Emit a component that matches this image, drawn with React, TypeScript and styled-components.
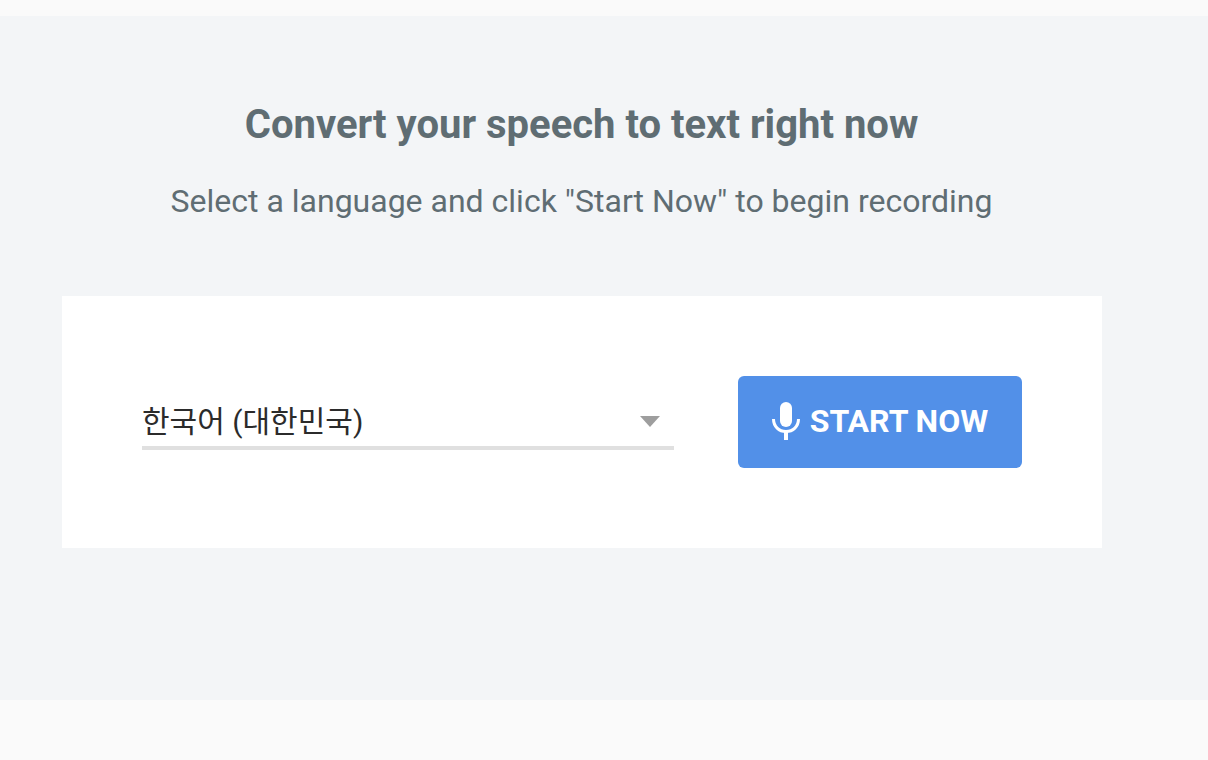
import { createGlobalStyle, styled } from 'styled-components';

const GlobalStyle = createGlobalStyle`
  html, body {
    margin: 0;
    padding: 0;
    background: #fafafa;
  }
`;

const Page = styled.div`
  width: 1208px;
  height: 760px;
  padding-top: 16px;
  box-sizing: border-box;
  background: #fafafa;
  font-family: Roboto, 'Noto Sans CJK KR', sans-serif;
  overflow: hidden;
`;

const Section = styled.section`
  height: 684px;
  background: #f3f5f7;
  padding: 81px 0 0 62px;
  box-sizing: border-box;
`;

const Content = styled.div`
  width: 1039px;
`;

const Title = styled.h2`
  margin: 0;
  font-size: 40px;
  line-height: 56px;
  font-weight: 700;
  color: #5f6d73;
  text-align: center;
`;

const Subtitle = styled.p`
  margin: 27px 0 0;
  font-size: 32px;
  line-height: 42px;
  font-weight: 400;
  color: #5f6d73;
  text-align: center;
`;

const Card = styled.div`
  margin-top: 74px;
  width: 1040px;
  height: 252px;
  background: #fff;
  display: flex;
  align-items: flex-start;
  padding: 80px 80px 0;
  box-sizing: border-box;
  gap: 64px;
`;

const SelectBox = styled.div`
  width: 532px;
  height: 74px;
  border-bottom: 4px solid #e0e0e0;
  box-sizing: border-box;
  display: flex;
  align-items: center;
  justify-content: space-between;
  padding: 16px 14px 0 0;
`;

const SelectValue = styled.span`
  font-size: 30px;
  color: #2b2b2b;
`;

const Caret = styled.span`
  width: 0;
  height: 0;
  margin-top: 4px;
  border-left: 10px solid transparent;
  border-right: 10px solid transparent;
  border-top: 11px solid #9e9e9e;
`;

const StartButton = styled.button`
  width: 284px;
  height: 92px;
  border: 0;
  border-radius: 6px;
  background: #5290e8;
  color: #fff;
  font-family: inherit;
  font-size: 32px;
  font-weight: 700;
  display: flex;
  align-items: center;
  justify-content: center;
  gap: 10px;
  padding: 0 0 2px;
`;

function App() {
  return (
    <>
      <GlobalStyle />
      <Page>
        <Section>
          <Content>
            <Title>Convert your speech to text right now</Title>
            <Subtitle>Select a language and click "Start Now" to begin recording</Subtitle>
            <Card>
              <SelectBox>
                <SelectValue>한국어 (대한민국)</SelectValue>
                <Caret />
              </SelectBox>
              <StartButton>
                <svg width="28" height="38" viewBox="0 0 28 38" fill="none">
                  <rect x="8" y="0" width="12" height="25" rx="6" fill="#fff" />
                  <path d="M1.500 17c0 7.500 5.500 12.500 12.500 12.500S26.500 24.500 26.500 17" stroke="#fff" strokeWidth="3" />
                  <rect x="12" y="29" width="4" height="9" fill="#fff" />
                </svg>
                START NOW
              </StartButton>
            </Card>
          </Content>
        </Section>
      </Page>
    </>
  );
}

export default App;
